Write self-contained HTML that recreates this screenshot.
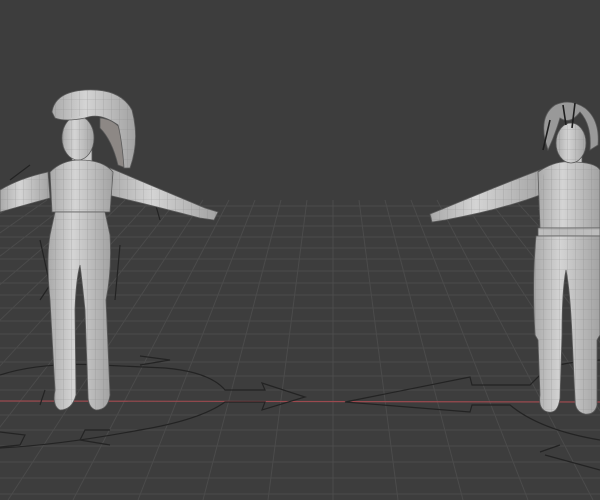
<!DOCTYPE html>
<html><head><meta charset="utf-8"><style>
html,body{margin:0;padding:0;background:#3d3d3d;overflow:hidden}
svg{display:block}
</style></head><body>
<svg width="600" height="500" viewBox="0 0 600 500" xmlns="http://www.w3.org/2000/svg">
<defs>
<linearGradient id="b" x1="0" x2="1" y1="0" y2="0">
<stop offset="0" stop-color="#a9a9a9"/><stop offset="0.4" stop-color="#d4d4d4"/><stop offset="1" stop-color="#a2a2a2"/>
</linearGradient>
<pattern id="mesh" width="8" height="10" patternUnits="userSpaceOnUse">
<path d="M8 0V10M0 10H8" stroke="#777" stroke-opacity="0.55" stroke-width="0.6" fill="none"/>
</pattern>
<clipPath id="c1"><path d="M48 172Q20 178 0 190V212Q25 205 50 198ZM110 168Q150 185 205 208L218 212L214 220L200 218Q150 205 108 195ZM50 172Q62 160 80 160Q103 160 113 172L110 212H52ZM55 212H105L110 235Q112 270 106 300L110 395Q108 410 96 410Q88 408 88 395L85 310Q82 280 80 265Q76 280 75 310L76 395Q72 410 60 410Q52 406 55 390L50 300Q46 260 50 235ZM62 138a16 22 0 1 0 32 0a16 22 0 1 0 -32 0ZM52 112Q55 92 85 90Q120 88 132 110Q140 140 130 168L124 168Q122 140 118 125Q100 112 85 118Q65 122 55 118Z"/></clipPath>
<clipPath id="c2"><path d="M545 168Q500 185 440 210L430 214L432 222L445 220Q500 210 540 195ZM538 172Q555 160 572 162Q595 162 600 170V236H538ZM536 236H600V335L597 340V405Q595 415 585 414Q575 412 575 400L572 335Q570 290 566 270Q562 290 562 335L560 398Q558 414 548 412Q538 410 540 395L538 340L535 335Q532 280 536 236ZM556 143a15 20 0 1 0 30 0a15 20 0 1 0 -30 0Z"/></clipPath>
</defs>
<rect width="600" height="500" fill="#3d3d3d"/>
<g stroke="#4b4b4b" stroke-width="1">
<path d="M0 206H600M0 216H600M0 226H600M0 237H600M0 248H600M0 259H600M0 271H600M0 283H600M0 295H600M0 308H600M0 321H600M0 334H600M0 348H600M0 362H600M0 376H600M0 390H600M0 415H600M0 430H600M0 446H600M0 462H600M0 478H600M0 494H600"/>
<path d="M21 200L-447 500M47 200L-382 500M73 200L-317 500M99 200L-252 500M125 200L-187 500M151 200L-122 500M177 200L-57 500M203 200L8 500M229 200L73 500M255 200L138 500M281 200L203 500M307 200L268 500M333 200L333 500M359 200L398 500M385 200L463 500M411 200L528 500M437 200L593 500M463 200L658 500M489 200L723 500M515 200L788 500M541 200L853 500M567 200L918 500M593 200L983 500"/>
</g>
<line x1="0" y1="401" x2="600" y2="402" stroke="#9b4a4f" stroke-width="1.2"/>
<g fill="none" stroke="#232323" stroke-width="1.2">
<path d="M0 375Q40 362 100 365L165 368Q210 372 225 390H265L262 383L305 397L262 410L265 402H225Q200 420 140 430Q60 445 0 448"/>
<path d="M0 432L25 435L20 445L0 447M110 445L80 440L85 430L110 430"/>
<path d="M600 360Q560 362 545 370L530 385H472L470 377L345 402L470 412L472 405H510Q540 430 600 440"/>
<path d="M545 455L600 470M540 452L560 445"/>
<path d="M140 356L170 360L140 365M150 185L160 220M115 185L150 185M10 180L30 165M45 390L40 405"/>
<path d="M40 240L50 285L40 300M120 245L115 300M560 300L535 330M590 300L600 330"/>
</g>
<g stroke="#5a5a5a" stroke-width="0.8">
<path d="M48 172Q20 178 0 190V212Q25 205 50 198Z" fill="url(#b)"/>
<path d="M110 168Q150 185 205 208L218 212L214 220L200 218Q150 205 108 195Z" fill="url(#b)"/>
<path d="M72 150H92V162H72Z" fill="#c9c9c9"/>
<path d="M50 172Q62 160 80 160Q103 160 113 172L110 212H52Z" fill="url(#b)"/>
<path d="M55 212H105L110 235Q112 270 106 300L110 395Q108 410 96 410Q88 408 88 395L85 310Q82 280 80 265Q76 280 75 310L76 395Q72 410 60 410Q52 406 55 390L50 300Q46 260 50 235Z" fill="url(#b)"/>
<ellipse cx="78" cy="138" rx="16" ry="22" fill="url(#b)"/>
<path d="M100 118Q120 120 126 140Q124 155 126 168L118 165Q112 140 100 128Z" fill="#8d8885"/>
<path d="M52 112Q55 92 85 90Q120 88 132 110Q140 140 130 168L124 168Q122 140 118 125Q100 112 85 118Q65 122 55 118Z" fill="url(#b)"/>
<rect x="0" y="88" width="220" height="325" fill="url(#mesh)" clip-path="url(#c1)" stroke="none"/>
</g>
<g stroke="#5a5a5a" stroke-width="0.8">
<path d="M545 168Q500 185 440 210L430 214L432 222L445 220Q500 210 540 195Z" fill="url(#b)"/>
<path d="M564 156H582V168H564Z" fill="#c9c9c9"/>
<path d="M538 172Q555 160 572 162Q595 162 600 170V228H540Z" fill="url(#b)"/>
<path d="M538 228H600V236H538Z" fill="#bdbdbd"/>
<path d="M536 236H600V335L597 340V405Q595 415 585 414Q575 412 575 400L572 335Q570 290 566 270Q562 290 562 335L560 398Q558 414 548 412Q538 410 540 395L538 340L535 335Q532 280 536 236Z" fill="url(#b)"/>
<ellipse cx="571" cy="143" rx="15" ry="20" fill="url(#b)"/>
<path d="M545 140Q540 115 555 105Q570 98 585 108Q600 120 598 145L590 150Q592 125 580 112Q570 125 560 118Q555 135 548 150Z" fill="#999"/>
<rect x="425" y="95" width="175" height="320" fill="url(#mesh)" clip-path="url(#c2)" stroke="none"/>
<path d="M563 105L566 125M575 103L572 128M550 120L543 150" stroke="#1e1e1e" stroke-width="1.6" fill="none"/>
</g>
</svg>
</body></html>
